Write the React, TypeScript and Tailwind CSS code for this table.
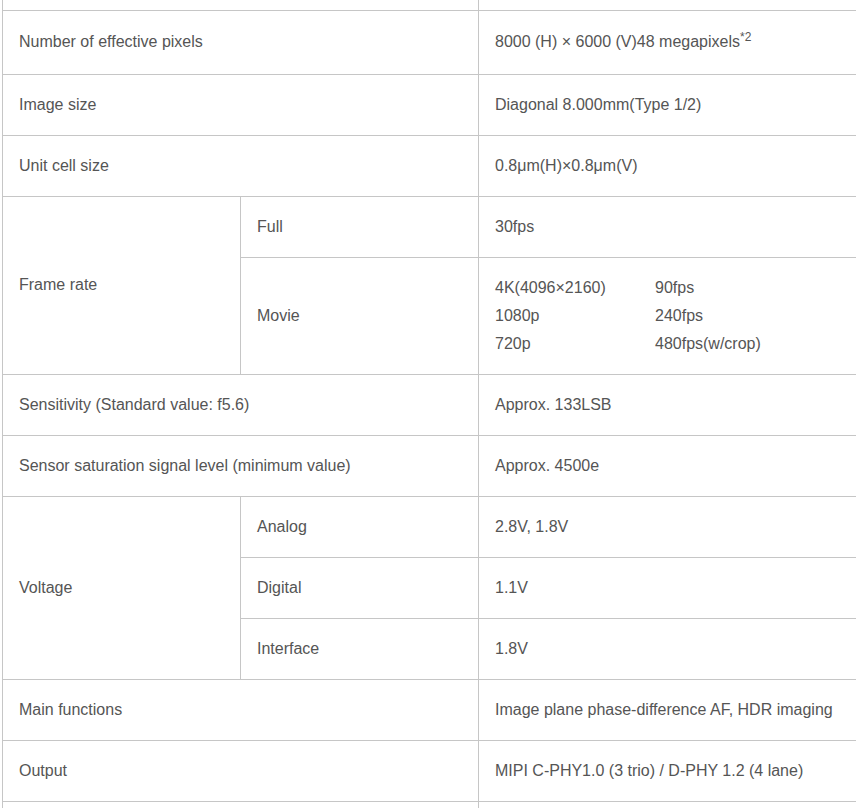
const cell = "border border-[#c6c6c6] px-4 py-4 align-middle";

type Row = { label: string; value: React.ReactNode };

const singleRows: Row[] = [
  { label: "Image size", value: "Diagonal 8.000mm(Type 1/2)" },
  { label: "Unit cell size", value: "0.8μm(H)×0.8μm(V)" },
];

const movie = [
  ["4K(4096×2160)", "90fps"],
  ["1080p", "240fps"],
  ["720p", "480fps(w/crop)"],
];

function SpanRow({ label, value }: Row) {
  return (
    <tr>
      <td colSpan={2} className={cell}>
        {label}
      </td>
      <td className={cell}>{value}</td>
    </tr>
  );
}

export default function App() {
  return (
    <div
      className="w-[856px] h-[808px] overflow-hidden bg-white pl-[2px] text-[16px] leading-[28px] text-[#555]"
      style={{ fontFamily: '"Liberation Sans", Arial, sans-serif' }}
    >
      <table className="table-fixed border-collapse w-[1200px]">
        <colgroup>
          <col className="w-[238px]" />
          <col className="w-[238px]" />
          <col />
        </colgroup>
        <tbody>
          <tr>
            <td colSpan={2} className="border-x border-b border-[#c6c6c6] p-0 h-[10px]" />
            <td className="border-x border-b border-[#c6c6c6] p-0 h-[10px]" />
          </tr>
          <tr>
            <td colSpan={2} className="border border-[#c6c6c6] px-4 pt-[17px] pb-[18px] align-middle">
              Number of effective pixels
            </td>
            <td className="border border-[#c6c6c6] px-4 pt-[17px] pb-[18px] align-middle">
              8000 (H) × 6000 (V)48 megapixels<sup className="text-[12px]">*2</sup>
            </td>
          </tr>
          {singleRows.map((r) => (
            <SpanRow key={r.label} {...r} />
          ))}
          <tr>
            <td rowSpan={2} className={cell}>
              Frame rate
            </td>
            <td className={cell}>Full</td>
            <td className={cell}>30fps</td>
          </tr>
          <tr>
            <td className={cell}>Movie</td>
            <td className={cell}>
              <div className="grid grid-cols-[160px_auto]">
                {movie.map(([a, b]) => (
                  <div key={a} className="contents">
                    <span>{a}</span>
                    <span>{b}</span>
                  </div>
                ))}
              </div>
            </td>
          </tr>
          <SpanRow label="Sensitivity (Standard value: f5.6)" value="Approx. 133LSB" />
          <SpanRow label="Sensor saturation signal level (minimum value)" value="Approx. 4500e" />
          <tr>
            <td rowSpan={3} className={cell}>
              Voltage
            </td>
            <td className={cell}>Analog</td>
            <td className={cell}>2.8V, 1.8V</td>
          </tr>
          <tr>
            <td className={cell}>Digital</td>
            <td className={cell}>1.1V</td>
          </tr>
          <tr>
            <td className={cell}>Interface</td>
            <td className={cell}>1.8V</td>
          </tr>
          <SpanRow label="Main functions" value="Image plane phase-difference AF, HDR imaging" />
          <SpanRow label="Output" value="MIPI C-PHY1.0 (3 trio) / D-PHY 1.2 (4 lane)" />
          <tr>
            <td colSpan={2} className={cell}>
              &nbsp;
            </td>
            <td className={cell}>&nbsp;</td>
          </tr>
        </tbody>
      </table>
    </div>
  );
}
